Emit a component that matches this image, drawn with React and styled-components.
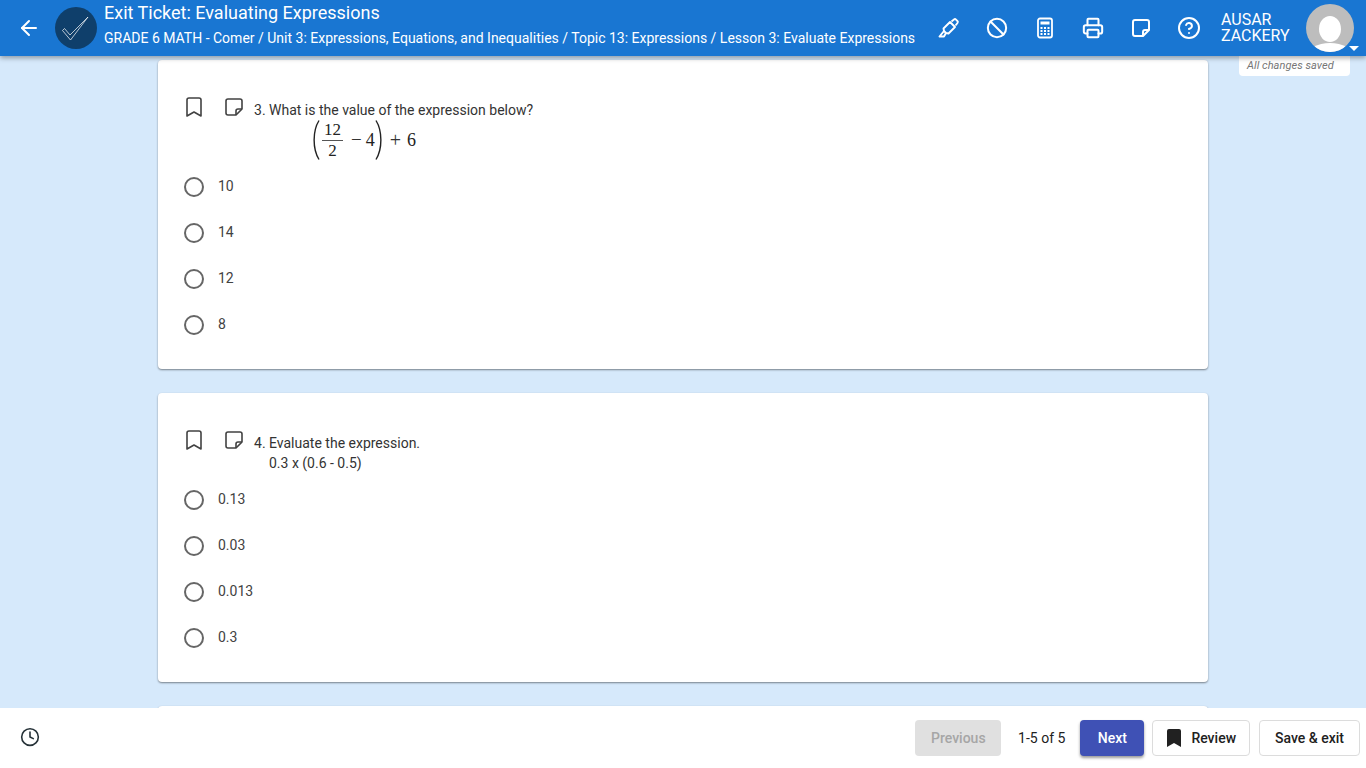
import React from 'react'
import styled, { createGlobalStyle } from 'styled-components'
import { ArrowLeft, Ban, Bookmark, CircleHelp, Clock, Printer } from 'lucide-react'

const GlobalStyle = createGlobalStyle`
  html, body {
    margin: 0;
    height: 100%;
    overflow: hidden;
  }
  body {
    font-family: Roboto, "Liberation Sans", sans-serif;
    color: #212121;
  }
  * {
    box-sizing: border-box;
  }
`

const questions = [
  {
    id: 3,
    text: 'What is the value of the expression below?',
    math: true,
    choices: ['10', '14', '12', '8']
  },
  {
    id: 4,
    text: 'Evaluate the expression.',
    detail: '0.3 x (0.6 - 0.5)',
    choices: ['0.13', '0.03', '0.013', '0.3']
  }
]

const NoteIcon = ({ size = 24, strokeWidth = 2 }) => (
  <svg width={size} height={size} viewBox="0 0 24 24" fill="none" stroke="currentColor" strokeWidth={strokeWidth} strokeLinejoin="round">
    <path d="M6 4h12a2 2 0 0 1 2 2v8l-6 6H6a2 2 0 0 1-2-2V6a2 2 0 0 1 2-2z" />
    <path d="M14 20v-4a2 2 0 0 1 2-2h4" />
  </svg>
)

const HighlighterIcon = () => (
  <svg width="24" height="24" viewBox="0 0 24 24" fill="none" stroke="currentColor" strokeWidth="1.9" strokeLinejoin="round">
    <path d="M14.5 5.5 17 3.5a1.5 1.5 0 0 1 2 .1l1.4 1.4a1.5 1.5 0 0 1 .1 2l-2 2.5" />
    <path d="M13 6l5 5-6.5 6.5-2.5-.5-2-2-.5-2.500z" />
    <path d="M7 15l-4.500 5.500H7l2-3.500" />
  </svg>
)

const CalculatorIcon = () => (
  <svg width="24" height="24" viewBox="0 0 24 24" fill="none" stroke="currentColor" strokeWidth="1.8">
    <rect x="5" y="2.500" width="14" height="19" rx="2" />
    <rect x="7.500" y="5.500" width="9" height="3" fill="currentColor" stroke="none" />
    <g fill="currentColor" stroke="none">
      {[7.5, 11, 14.5].flatMap(x => [11, 14, 17].map(y => (
        <rect key={`${x}-${y}`} x={x} y={y} width="2" height="2" />
      )))}
    </g>
  </svg>
)

const Logo = () => (
  <LogoCircle>
    <svg width="42" height="42" viewBox="0 0 42 42" fill="none" stroke="#ffffff" strokeWidth="0.7" strokeLinejoin="round">
      <path d="M7.500 23.500 9.500 21.500 15 28 33 10 15.500 33z" />
    </svg>
  </LogoCircle>
)

const Paren = ({ right }) => (
  <svg width="9" height="40" viewBox="0 0 9 40" fill="none" stroke="#222" strokeWidth="1.4">
    <path d={right ? 'M1 0.500C7.500 11 7.500 29 1 39.500' : 'M8 0.500C1.500 11 1.500 29 8 39.500'} />
  </svg>
)

const Expression = () => (
  <MathBlock>
    <Paren />
    <Fraction>
      <span>12</span>
      <span>2</span>
    </Fraction>
    <Operator>−</Operator>
    <MathNumber>4</MathNumber>
    <Paren right />
    <Operator $wide>+</Operator>
    <MathNumber>6</MathNumber>
  </MathBlock>
)

const Question = ({ question }) => (
  <Card>
    <Head>
      <MarkButton><Bookmark size={24} strokeWidth={1.6} /></MarkButton>
      <MarkButton $note><NoteIcon strokeWidth={1.6} /></MarkButton>
      <Prompt>
        <div>{question.id}. {question.text}</div>
        {question.detail && <Detail>{question.detail}</Detail>}
        {question.math && <Expression />}
      </Prompt>
    </Head>
    <Choices>
      {question.choices.map(choice => (
        <Choice key={choice}>
          <Radio />
          <ChoiceText>{choice}</ChoiceText>
        </Choice>
      ))}
    </Choices>
  </Card>
)

const App = () => {
  return <Page>
    <GlobalStyle />
    <Header>
      <BackButton><ArrowLeft size={24} strokeWidth={2} /></BackButton>
      <Logo />
      <Titles>
        <Title>Exit Ticket: Evaluating Expressions</Title>
        <Crumbs>GRADE 6 MATH - Comer / Unit 3: Expressions, Equations, and Inequalities / Topic 13: Expressions / Lesson 3: Evaluate Expressions</Crumbs>
      </Titles>
      <Tools>
        <Tool><HighlighterIcon /></Tool>
        <Tool><Ban size={22} strokeWidth={2.2} /></Tool>
        <Tool><CalculatorIcon /></Tool>
        <Tool><Printer size={22} strokeWidth={2.2} /></Tool>
        <Tool><NoteIcon /></Tool>
        <Tool><CircleHelp size={24} strokeWidth={2} /></Tool>
      </Tools>
      <UserName>AUSAR<br />ZACKERY</UserName>
      <Avatar>
        <AvatarCircle>
          <svg width="48" height="48" viewBox="0 0 48 48" fill="#ffffff">
            <ellipse cx="24" cy="25" rx="11" ry="13" />
            <ellipse cx="24" cy="52" rx="23" ry="13" />
          </svg>
        </AvatarCircle>
        <Caret />
      </Avatar>
    </Header>

    <Main>
      <Saved>All changes saved</Saved>
      {questions.map(question => <Question key={question.id} question={question} />)}
      <Card />
    </Main>

    <Footer>
      <ClockSlot><Clock size={20} strokeWidth={1.9} /></ClockSlot>
      <FooterButton $variant="disabled">Previous</FooterButton>
      <PageCount>1-5 of 5</PageCount>
      <FooterButton $variant="primary">Next</FooterButton>
      <FooterButton $variant="outline" $icon>
        <Bookmark size={24} fill="#212121" strokeWidth={0} />
        <span>Review</span>
      </FooterButton>
      <FooterButton $variant="outline" $spaced>Save &amp; exit</FooterButton>
    </Footer>
  </Page>
}

const Page = styled.div`
  width: 100%;
  height: 100vh;
  display: flex;
  flex-direction: column;
  background: #d6e9fb;
  overflow: hidden;
`

const Header = styled.header`
  position: relative;
  z-index: 2;
  flex: 0 0 56px;
  display: flex;
  align-items: center;
  padding: 0 12px 0 5px;
  background: #1976d2;
  color: #ffffff;
  box-shadow: 0 2px 5px rgba(0, 0, 0, 0.35);
`

const BackButton = styled.div`
  width: 48px;
  height: 48px;
  display: flex;
  align-items: center;
  justify-content: center;
`

const LogoCircle = styled.div`
  width: 42px;
  height: 42px;
  margin-left: 2px;
  border-radius: 50%;
  background: #0f3f6b;
  svg {
    display: block;
  }
`

const Titles = styled.div`
  flex: 1;
  align-self: flex-start;
  min-width: 0;
  margin-left: 7px;
  padding-top: 1px;
  white-space: nowrap;
`

const Title = styled.div`
  font-size: 18px;
  line-height: 24px;
`

const Crumbs = styled.div`
  font-size: 14px;
  line-height: 20px;
  margin-top: 3px;
`

const Tools = styled.div`
  display: flex;
  align-items: center;
`

const Tool = styled.div`
  width: 48px;
  height: 48px;
  display: flex;
  align-items: center;
  justify-content: center;
`

const UserName = styled.div`
  width: 85px;
  margin-left: 8px;
  font-size: 16px;
  line-height: 16px;
`

const Avatar = styled.div`
  position: relative;
  width: 48px;
  height: 48px;
`

const AvatarCircle = styled.div`
  width: 48px;
  height: 48px;
  border-radius: 50%;
  overflow: hidden;
  background: #bdbdbd;
  svg {
    display: block;
  }
`

const Caret = styled.span`
  position: absolute;
  right: -5px;
  bottom: 1px;
  border-left: 5px solid transparent;
  border-right: 5px solid transparent;
  border-top: 5px solid #ffffff;
`

const Main = styled.main`
  position: relative;
  flex: 1;
  min-height: 0;
  overflow: hidden;
  display: flex;
  flex-direction: column;
  align-items: center;
  gap: 24px;
  padding-top: 4px;
`

const Saved = styled.div`
  position: absolute;
  z-index: 1;
  top: 0;
  right: 16px;
  width: 111px;
  height: 20px;
  padding-left: 8px;
  border-radius: 0 0 4px 4px;
  background: #ffffff;
  color: #757575;
  font-size: 11px;
  font-style: italic;
  line-height: 19px;
  letter-spacing: 0.05px;
`

const Card = styled.section`
  flex: none;
  width: 1050px;
  padding: 35px 24px 21px;
  border-radius: 4px;
  background: #ffffff;
  box-shadow: 0 1px 2px rgba(0, 0, 0, 0.45);
`

const Head = styled.div`
  display: flex;
  align-items: flex-start;
  padding-bottom: 4px;
`

const MarkButton = styled.div`
  flex: none;
  width: 24px;
  height: 24px;
  margin-right: ${props => (props.$note ? '8px' : '16px')};
  color: #424242;
  svg {
    display: block;
  }
`

const Prompt = styled.div`
  padding-top: 5px;
  font-size: 14px;
  line-height: 20px;
  color: #333333;
`

const Detail = styled.div`
  padding-left: 15px;
`

const MathBlock = styled.div`
  height: 40px;
  margin-left: 57px;
  display: flex;
  align-items: center;
  font-family: "Liberation Serif", serif;
  font-size: 18px;
  color: #222222;
`

const Fraction = styled.div`
  display: flex;
  flex-direction: column;
  align-items: center;
  width: 21px;
  margin-left: 2px;
  font-size: 17px;
  line-height: 19px;
  span:first-child {
    width: 100%;
    text-align: center;
    border-bottom: 1px solid #555555;
    padding-bottom: 1px;
  }
`

const Operator = styled.span`
  margin: 0 ${props => (props.$wide ? '6px' : '4px')} 0 ${props => (props.$wide ? '6px' : '8px')};
  font-size: ${props => (props.$wide ? '20px' : '19px')};
  color: #333333;
`

const MathNumber = styled.span`
  display: inline-block;
`

const Choices = styled.div`
  display: flex;
  flex-direction: column;
`

const Choice = styled.label`
  height: 46px;
  display: flex;
  align-items: center;
  gap: 14px;
  padding-left: 2px;
  font-size: 14px;
  color: #424242;
`

const ChoiceText = styled.span`
  padding-bottom: 2px;
`

const Radio = styled.span`
  width: 20px;
  height: 20px;
  border: 2px solid #666666;
  border-radius: 50%;
`

const Footer = styled.footer`
  position: relative;
  z-index: 1;
  flex: 0 0 60px;
  display: flex;
  align-items: center;
  gap: 8px;
  padding: 0 6px 0 20px;
  background: #ffffff;
`

const ClockSlot = styled.div`
  margin-right: auto;
  margin-top: -2px;
  color: #263238;
  svg {
    display: block;
  }
`

const FooterButton = styled.div`
  height: 36px;
  min-width: 64px;
  display: flex;
  align-items: center;
  justify-content: center;
  margin-left: ${props => (props.$spaced ? '1px' : '0')};
  padding: ${props => (props.$icon ? '0 13px 1px 9px' : props.$variant === 'outline' ? '0 15px 1px' : '0 15.5px 1px')};
  border-radius: 4px;
  font-size: 14px;
  font-weight: 500;
  background: ${props => ({ disabled: '#e0e0e0', primary: '#3f51b5' }[props.$variant] || '#ffffff')};
  color: ${props => ({ disabled: '#a6a6a6', primary: '#ffffff' }[props.$variant] || '#212121')};
  border: ${props => (props.$variant === 'outline' ? '1px solid #dcdcdc' : 'none')};
  box-shadow: ${props => (props.$variant === 'primary' ? '0 2px 3px rgba(0, 0, 0, 0.4)' : 'none')};
  span {
    margin-left: 5px;
  }
`

const PageCount = styled.div`
  margin: -1px 7px 0 9px;
  font-size: 14px;
  color: #212121;
`

export default App
